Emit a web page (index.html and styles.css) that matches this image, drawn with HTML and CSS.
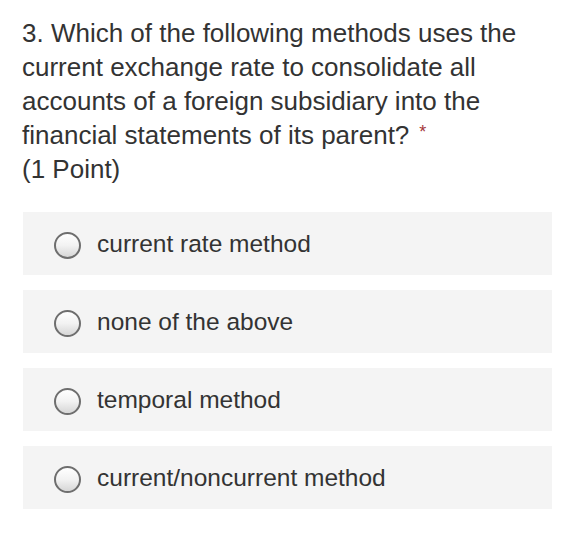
FILE: index.html
```html
<!DOCTYPE html>
<html>
<head>
<meta charset="utf-8">
<link rel="stylesheet" href="styles.css">
</head>
<body>
<div class="page">
  <div class="question">
    <div class="title">3. Which of the following methods uses the current exchange rate to consolidate all accounts of a foreign subsidiary into the financial statements of its parent?<span class="req">*</span></div>
    <div class="points">(1 Point)</div>
  </div>
  <div class="options">
    <label class="option"><span class="radio"></span><span class="label">current rate method</span></label>
    <label class="option"><span class="radio"></span><span class="label">none of the above</span></label>
    <label class="option"><span class="radio"></span><span class="label">temporal method</span></label>
    <label class="option"><span class="radio"></span><span class="label">current/noncurrent method</span></label>
  </div>
</div>
</body>
</html>
```
FILE: styles.css
```css
html, body {
  margin: 0;
  padding: 0;
  background: #ffffff;
}
.page {
  padding: 16px 23px 0 22px;
  font-family: "Liberation Sans", Arial, sans-serif;
  color: #333333;
}
.question {
  font-size: 26px;
  line-height: 34px;
  width: 510px;
}
.req {
  color: #a4373a;
  font-size: 18px;
  line-height: 0;
  vertical-align: 6px;
  margin-left: 10px;
}
.options {
  margin-top: 26px;
  display: flex;
  flex-direction: column;
  gap: 15px;
  margin-left: 1px;
}
.option {
  display: flex;
  align-items: center;
  height: 63px;
  background: #f4f4f4;
  padding-left: 31px;
  box-sizing: border-box;
}
.radio {
  width: 27px;
  height: 27px;
  box-sizing: border-box;
  border-radius: 50%;
  border: 2px solid #6e6e6e;
  background: linear-gradient(#ffffff 0%, #f2f2f2 50%, #d6d6d6 100%);
  flex: none;
  margin-right: 16px;
  margin-top: 3px;
}
.label {
  font-size: 24.5px;
  color: #333333;
}
```
